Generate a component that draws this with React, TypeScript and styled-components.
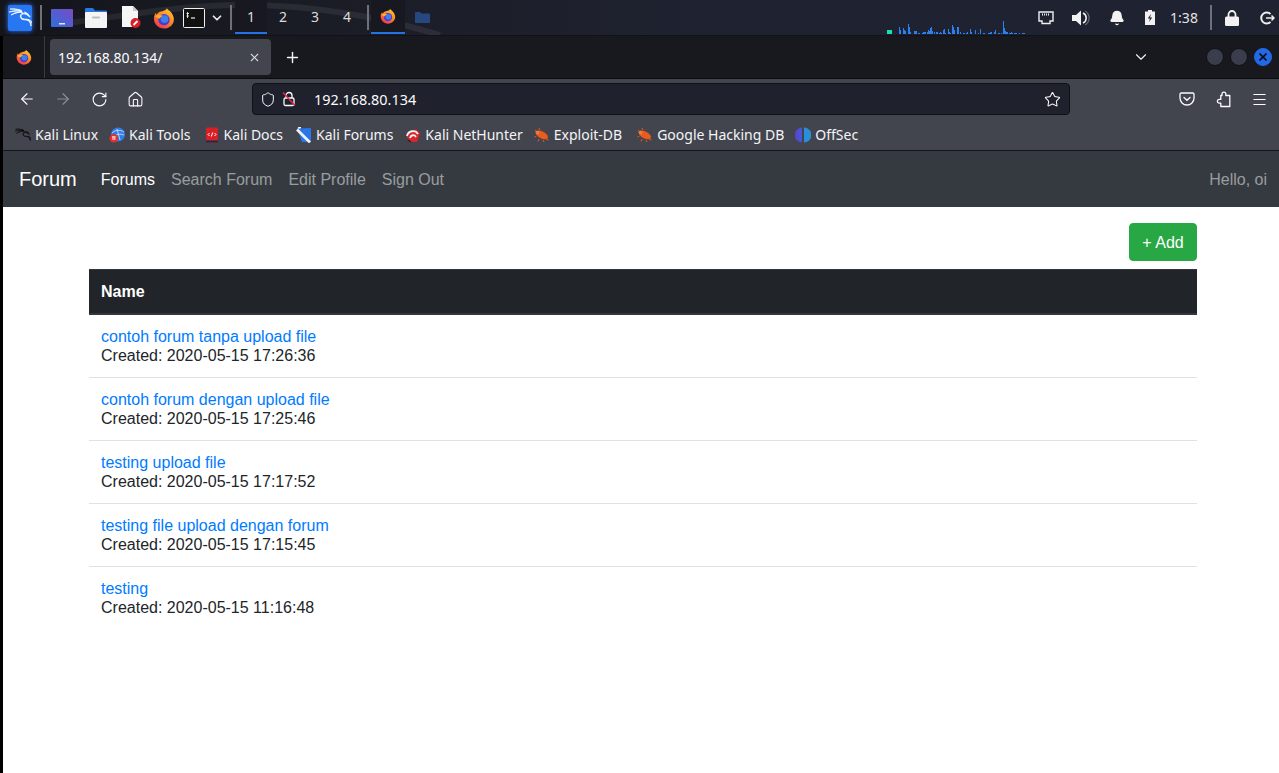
import React from "react";
import styled, { createGlobalStyle } from "styled-components";
import { ArrowLeft, ArrowRight, RotateCw, House, Shield, Star, Plus, X, ChevronDown, Menu, Bell } from "lucide-react";
import { SiKalilinux } from "react-icons/si";

const Global = createGlobalStyle`
  html, body { margin: 0; padding: 0; background: #000; }
  * { box-sizing: border-box; }
`;

const Screen = styled.div`
  width: 1279px;
  height: 773px;
  overflow: hidden;
  display: flex;
  flex-direction: column;
  background: #000;
  font-family: "Noto Sans", sans-serif;
`;

/* ---------- desktop panel ---------- */
const Panel = styled.div`
  position: relative;
  height: 36px;
  flex: none;
  display: flex;
  align-items: stretch;
  padding-left: 4px;
  background: linear-gradient(90deg, #14151b 0, #1a1c25 300px, #1f2230 700px, #1f2230 100%);
  border-bottom: 1px solid #111218;
  overflow: hidden;
  color: #e6e6e6;
`;
const Swoosh = styled.svg`
  position: absolute;
  left: 0;
  top: 0;
  pointer-events: none;
`;
const Slot = styled.div<{ $w: number; $ml?: number }>`
  position: relative;
  width: ${(p) => p.$w}px;
  margin-left: ${(p) => p.$ml ?? 0}px;
  flex: none;
  display: flex;
  align-items: center;
  justify-content: center;
`;
const PanelSep = styled.div<{ $ml: number; $mr: number }>`
  position: relative;
  width: 2px;
  flex: none;
  margin: 5px ${(p) => p.$mr}px 5px ${(p) => p.$ml}px;
  background: #6f7178;
`;
const KaliBadge = styled.div`
  width: 24px;
  height: 26px;
  display: flex;
  align-items: center;
  justify-content: center;
  background: #2777f5;
  border-radius: 2px;
  box-shadow: 0 0 5px #2a78ff;
  color: #fff;
`;
const Workspace = styled.div<{ $active?: boolean; $w?: number }>`
  position: relative;
  width: ${(p) => p.$w ?? 32}px;
  flex: none;
  display: flex;
  align-items: center;
  justify-content: center;
  font-size: 14px;
  color: #dcdcdc;
  background: ${(p) => (p.$active ? "#171820" : "transparent")};
  border-bottom: 2px solid ${(p) => (p.$active ? "#2473e6" : "transparent")};
  margin-bottom: 1px;
`;
const Spacer = styled.div`
  flex: 1;
`;
const Graph = styled.svg`
  position: relative;
  flex: none;
  align-self: flex-end;
  margin-right: 4px;
  margin-bottom: 1px;
`;
const Clock = styled.div`
  position: relative;
  width: 38px;
  flex: none;
  display: flex;
  align-items: center;
  justify-content: center;
  font-size: 14px;
  color: #e4e4e4;
`;

/* ---------- browser ---------- */
const Browser = styled.div`
  flex: 1;
  min-height: 0;
  margin-left: 3px;
  display: flex;
  flex-direction: column;
`;
const TabBar = styled.div`
  position: relative;
  height: 43px;
  flex: none;
  display: flex;
  align-items: center;
  background: #18191f;
  color: #f4f4f5;
  border-bottom: 1px solid #0c0c0f;
`;
const TabLogo = styled.div`
  width: 42px;
  align-self: stretch;
  flex: none;
  display: flex;
  align-items: center;
  justify-content: center;
  border-right: 1px solid #3a3b42;
  margin-right: 5px;
`;
const Tab = styled.div`
  width: 221px;
  height: 36px;
  flex: none;
  display: flex;
  align-items: center;
  justify-content: space-between;
  padding: 0 10px 0 8px;
  background: #42454e;
  border-radius: 4px;
  font-size: 14px;
  color: #fbfbfe;
`;
const NewTab = styled.div`
  width: 42px;
  flex: none;
  display: flex;
  justify-content: center;
`;
const WinButtons = styled.div`
  display: flex;
  align-items: center;
  gap: 6px;
  margin: 0 7px 0 56px;
`;
const WinButton = styled.div<{ $close?: boolean }>`
  width: 18px;
  height: 18px;
  border-radius: 50%;
  display: flex;
  align-items: center;
  justify-content: center;
  color: #0a0a10;
  background: ${(p) => (p.$close ? "#2369e6" : "#3a3e4c")};
  border: 1px solid ${(p) => (p.$close ? "#2369e6" : "#101116")};
`;
const Toolbar = styled.div`
  height: 41px;
  flex: none;
  display: flex;
  align-items: center;
  padding: 0 0 1px 6px;
  background: #42454e;
  color: #fbfbfe;
`;
const ToolButton = styled.div<{ $dim?: boolean }>`
  width: 36px;
  flex: none;
  display: flex;
  justify-content: center;
  opacity: ${(p) => (p.$dim ? 0.4 : 1)};
`;
const UrlBar = styled.div`
  width: 818px;
  height: 32px;
  flex: none;
  margin: 0 99px 0 99px;
  display: flex;
  align-items: center;
  padding: 0 8px 0 7px;
  background: #1f212c;
  border: 1px solid #101116;
  border-radius: 4px;
  font-size: 14.4px;
`;
const UrlText = styled.span`
  flex: 1;
  margin-left: 17px;
`;
const UrlIcon = styled.div<{ $ml?: number }>`
  width: 16px;
  margin-left: ${(p) => p.$ml ?? 0}px;
  display: flex;
  justify-content: center;
`;
const Bookmarks = styled.div`
  height: 31px;
  flex: none;
  display: flex;
  align-items: center;
  gap: 12px;
  padding: 0 0 1px 12px;
  background: #42454e;
  border-bottom: 1px solid #14151a;
  font-size: 14px;
  color: #f4f4f6;
`;
const Bookmark = styled.div<{ $nudge: number }>`
  display: flex;
  align-items: center;
  gap: 4px;
  white-space: nowrap;
  margin-right: ${(p) => p.$nudge}px;
`;

/* ---------- page ---------- */
const Page = styled.div`
  flex: 1;
  min-height: 0;
  background: #fff;
  font-family: "Liberation Sans", Arial, sans-serif;
  font-size: 16px;
  color: #212529;
`;
const NavBar = styled.nav`
  height: 56px;
  display: flex;
  align-items: center;
  padding: 0 12px 0 16px;
  background: #343a40;
`;
const Brand = styled.a`
  font-size: 20px;
  color: #fff;
  margin-right: 16px;
`;
const NavLink = styled.a<{ $active?: boolean }>`
  padding: 2px 8px 0;
  color: ${(p) => (p.$active ? "#fff" : "rgba(255,255,255,.5)")};
`;
const Hello = styled.span`
  margin-left: auto;
  padding-top: 2px;
  color: rgba(255, 255, 255, 0.5);
`;
const Content = styled.main`
  padding: 16px 82px 0 86px;
  line-height: 19px;
`;
const Actions = styled.div`
  display: flex;
  justify-content: flex-end;
  margin-bottom: 8px;
`;
const AddButton = styled.button`
  width: 68px;
  height: 38px;
  padding: 0;
  border: 1px solid #28a745;
  border-radius: 4px;
  background: #28a745;
  color: #fff;
  font: inherit;
`;
const TableHead = styled.div`
  height: 46px;
  padding: 12px;
  background: #212529;
  border-top: 1px solid #32383e;
  border-bottom: 2px solid #32383e;
  color: #fff;
  font-weight: 700;
`;
const Row = styled.div`
  padding: 12px;
  border-bottom: 1px solid #dee2e6;
  &:last-child {
    border-bottom: 0;
  }
`;
const RowLink = styled.a`
  display: block;
  color: #007bff;
`;

/* ---------- drawings ---------- */
const Firefox = ({ s = 20 }: { s?: number }) => (
  <svg width={s} height={s} viewBox="0 0 24 24">
    <defs>
      <linearGradient id="ffo" x1="0.8" y1="0" x2="0.2" y2="1">
        <stop offset="0" stopColor="#ffcb2e" />
        <stop offset="0.45" stopColor="#ff8a24" />
        <stop offset="1" stopColor="#f0304f" />
      </linearGradient>
    </defs>
    <path d="M15 1c1 2.500 5 3 6.800 8.200C23 12 23 14 22.300 16.500 20.800 20.500 17 23.500 12 23.500 5.500 23.500 1 18.500 1 12.500 1 10 1.800 8 3 6.500l1 2C5 6.500 7 5 9 4.800 12 3.800 15 3.500 15 1z" fill="url(#ffo)" />
    <circle cx="12" cy="13.800" r="6.200" fill="#4a3bd0" />
    <circle cx="12.600" cy="13.200" r="4.200" fill="#3f7fe8" />
    <path d="M2.500 10c2.500-1.500 5-2 8.500-.5 -1.500.8-3 1.500-3.500 3 -2-.2-3.800-1-5-2.500z" fill="#ffb02e" />
  </svg>
);
const Bug = () => (
  <svg width="16" height="16" viewBox="0 0 16 16">
    <g stroke="#e8551c" strokeWidth="1" fill="none">
      <path d="M3 5 1 3M6 3.500 5 1M2.500 9 0.500 10M5 12 4 14.500M9 13l1 2M12 12l2.500 1" />
    </g>
    <ellipse cx="8" cy="8" rx="6.500" ry="3.500" transform="rotate(28 8 8)" fill="#ec5a1e" />
    <circle cx="3.500" cy="5.500" r="2" fill="#f27a35" />
  </svg>
);
const Icons = {
  kaliTools: (
    <svg width="16" height="16" viewBox="0 0 16 16">
      <circle cx="9" cy="7.500" r="7" fill="#2f7de8" />
      <path d="M3 6c3-3 8-3.500 12-1M6 9c2-2 5-2.500 9-1M8 2l3 11" stroke="#d5e6fb" strokeWidth=".8" fill="none" />
      <circle cx="4.800" cy="11.200" r="4.300" fill="#e2302e" />
      <path d="M3 9.800h3.600M4 10v3M5.800 10v3" stroke="#fff" strokeWidth=".9" />
    </svg>
  ),
  kaliDocs: (
    <svg width="16" height="16" viewBox="0 0 16 16">
      <rect x="2" y="0.500" width="12" height="15" rx="1" fill="#d81f26" />
      <rect x="2" y="13.500" width="12" height="2" fill="#1c2a4a" />
      <path d="M5.500 6 4 7.500 5.500 9M10.500 6 12 7.500 10.500 9M8.700 5.500 7.300 9.500" stroke="#fff" strokeWidth="1" fill="none" />
    </svg>
  ),
  kaliForums: (
    <svg width="16" height="16" viewBox="0 0 16 16">
      <path d="M1 1.500 15 1v14H6z" fill="#2877e6" />
      <path d="M1 2.500 11 12.500l3 3" stroke="#f2f2f2" strokeWidth="2.600" fill="none" />
      <path d="M2 1 5 0.500" stroke="#fff" strokeWidth="1.500" />
    </svg>
  ),
  netHunter: (
    <svg width="16" height="16" viewBox="0 0 16 16">
      <path d="M1 8 11 2l4 4-3 9H5z" fill="#d9262e" />
      <path d="M2 9c1-5 8-7 11-2M5 11c1-3 4-4 6-1" stroke="#f3f3f3" strokeWidth="1.800" fill="none" />
      <path d="M3 13l3 2" stroke="#222" strokeWidth="1.500" />
    </svg>
  ),
  offSec: (
    <svg width="16" height="16" viewBox="0 0 16 16">
      <path d="M7 .500A7.500 7.500 0 0 0 7 15.500z" fill="#5a45c9" />
      <path d="M9 .500A7.500 7.500 0 0 1 9 15.500z" fill="#2a8fd8" />
      <path d="M7 .500A7.500 7.500 0 0 0 3 4v8l4 3.500z" fill="#3f5fd8" opacity=".7" />
    </svg>
  ),
  insecure: (
    <svg width="16" height="16" viewBox="0 0 16 16" fill="none">
      <rect x="3" y="7" width="10" height="7.500" rx="1.500" stroke="#fbfbfe" strokeWidth="1.300" />
      <path d="M5 7V4.500a3 3 0 0 1 6 0V7" stroke="#fbfbfe" strokeWidth="1.300" />
      <path d="M2 1.500 14 14.500" stroke="#e22850" strokeWidth="1.500" />
    </svg>
  ),
  pocket: (
    <svg width="16" height="16" viewBox="0 0 16 16" fill="none" stroke="#fbfbfe" strokeWidth="1.300">
      <path d="M2.200 2h11.600c.7 0 1.200.5 1.200 1.200V7c0 3.900-3.100 7-7 7s-7-3.100-7-7V3.200C1 2.500 1.500 2 2.200 2z" />
      <path d="M5 6.500 8 9.300l3-2.800" strokeLinecap="round" />
    </svg>
  ),
  extension: (
    <svg width="17" height="17" viewBox="0 0 17 17" fill="none" stroke="#fbfbfe" strokeWidth="1.300">
      <path d="M7 4.500V3a1.900 1.900 0 0 1 3.800 0v1.500h4v11h-9v-3.300H4.300a1.900 1.900 0 0 1 0-3.800H5.800v-3.900z" strokeLinejoin="round" />
    </svg>
  ),
  windowDesk: (
    <svg width="22" height="18" viewBox="0 0 22 18">
      <defs>
        <linearGradient id="dsk" x1="0" y1="1" x2="1" y2="0">
          <stop offset="0" stopColor="#2f6fdc" />
          <stop offset="1" stopColor="#7a4ac4" />
        </linearGradient>
      </defs>
      <rect width="22" height="18" rx="1" fill="url(#dsk)" />
      <rect x="8" y="14" width="6" height="1.500" fill="#dfe6f5" />
    </svg>
  ),
  files: (
    <svg width="22" height="20" viewBox="0 0 22 20">
      <path d="M1 0h7l2 2.500h11a1 1 0 0 1 1 1V8H0V1a1 1 0 0 1 1-1z" fill="#2a76e0" />
      <rect y="4" width="22" height="16" rx="1" fill="#f5f5f5" />
      <rect x="7" y="8.500" width="8" height="2" rx="1" fill="#bdbdbd" />
    </svg>
  ),
  editor: (
    <svg width="21" height="23" viewBox="0 0 21 23">
      <path d="M1 0h11l5 5v16H1z" fill="#f6f6f6" />
      <path d="M12 0l5 5h-5z" fill="#c8c8c8" />
      <circle cx="14.500" cy="17" r="5" fill="#d81f26" />
      <path d="M12.500 19l4-4" stroke="#fff" strokeWidth="1.800" />
    </svg>
  ),
  terminal: (
    <svg width="22" height="20" viewBox="0 0 22 20">
      <rect x=".5" y=".5" width="21" height="19" rx="1" fill="#111" stroke="#f2f2f2" />
      <path d="M4.500 4v6M3.500 5.500h2.500M3.500 8h2.500" stroke="#eee" strokeWidth=".9" />
      <path d="M8 10h4" stroke="#eee" strokeWidth="1.200" />
    </svg>
  ),
  dimFolder: (
    <svg width="15" height="11" viewBox="0 0 15 11">
      <path d="M0 1a1 1 0 0 1 1-1h4l1.500 1.500H14a1 1 0 0 1 1 1V10a1 1 0 0 1-1 1H1a1 1 0 0 1-1-1z" fill="#27477f" />
    </svg>
  ),
  net: (
    <svg width="16" height="14" viewBox="0 0 16 14" fill="none" stroke="#efefef" strokeWidth="1.400">
      <path d="M1 1h14v9h-3v2.500H4V10H1z" />
      <path d="M4 3.500h8" strokeDasharray="1 1" strokeWidth="2" />
    </svg>
  ),
  volume: (
    <svg width="18" height="16" viewBox="0 0 18 16">
      <path d="M0 5h4l5-4.500v15L4 11H0z" fill="#f2f2f2" />
      <path d="M11 3a5.500 5.500 0 0 1 0 10" stroke="#f2f2f2" strokeWidth="1.500" fill="none" />
      <path d="M13 1a8 8 0 0 1 0 14" stroke="#666" strokeWidth="1.300" fill="none" />
    </svg>
  ),
  battery: (
    <svg width="10" height="15" viewBox="0 0 10 15">
      <path d="M3 0h4v1.500h3V15H0V1.500h3z" fill="#f2f2f2" />
      <path d="M6 4 2.800 8.500H5L4 12l3.200-4.500H5z" fill="#1f2230" />
    </svg>
  ),
  lock: (
    <svg width="14" height="16" viewBox="0 0 14 16">
      <path d="M3.500 7V4.500a3.500 3.500 0 0 1 7 0V7" stroke="#f2f2f2" strokeWidth="1.800" fill="none" />
      <rect y="6.500" width="14" height="9.500" rx="1.500" fill="#f2f2f2" />
    </svg>
  ),
  logout: (
    <svg width="15" height="14" viewBox="0 0 15 14" fill="none" stroke="#efefef" strokeWidth="2">
      <path d="M10.500 3A5.500 5.500 0 1 0 10.500 11" />
      <path d="M6 7h8.500M11.500 4.500 14 7l-2.500 2.500" strokeWidth="1.500" />
    </svg>
  ),
};

const bars: [number, number][] = [
  [14, 7], [15, 4], [18, 6], [19, 4], [20, 3], [23, 10], [24, 7], [25, 2], [29, 3], [30, 3], [31, 3], [33, 1], [34, 1],
  [37, 1], [38, 2], [39, 2], [40, 2], [42, 2], [43, 4], [44, 3], [45, 6], [46, 7], [47, 3], [49, 2], [51, 2], [52, 2],
  [54, 1], [55, 2], [56, 1], [58, 4], [59, 5], [60, 1], [63, 5], [64, 2], [65, 1], [67, 9], [68, 7], [69, 4], [72, 7], [73, 7],
  [75, 2], [78, 1], [79, 1], [81, 1], [82, 2], [85, 5], [86, 2], [90, 4], [93, 1], [95, 5], [98, 1], [99, 1],
  [103, 1], [104, 1], [105, 2], [106, 2], [109, 2], [110, 4], [113, 1], [114, 1], [116, 1], [118, 13], [119, 6], [120, 3], [121, 2], [122, 2],
  [124, 1], [125, 1], [126, 2], [127, 1], [129, 1], [130, 1], [131, 1], [134, 1], [137, 1], [138, 1], [139, 1],
];

const forums = [
  ["contoh forum tanpa upload file", "2020-05-15 17:26:36"],
  ["contoh forum dengan upload file", "2020-05-15 17:25:46"],
  ["testing upload file", "2020-05-15 17:17:52"],
  ["testing file upload dengan forum", "2020-05-15 17:15:45"],
  ["testing", "2020-05-15 11:16:48"],
];

const marks: [React.ReactNode, string, number][] = [
  [<SiKalilinux key="k" size={16} color="#0c0c0c" stroke="#0c0c0c" strokeWidth={0.7} />, "Kali Linux", -1],
  [Icons.kaliTools, "Kali Tools", 1],
  [Icons.kaliDocs, "Kali Docs", 1],
  [Icons.kaliForums, "Kali Forums", 0],
  [Icons.netHunter, "Kali NetHunter", -1],
  [<Bug key="b1" />, "Exploit-DB", 3],
  [<Bug key="b2" />, "Google Hacking DB", -1],
  [Icons.offSec, "OffSec", 0],
];

export default function App() {
  return (
    <Screen>
      <Global />
      <Panel>
        <Swoosh width="1279" height="36" viewBox="0 0 1279 36">
          <path d="M60 24C120 17 180 4 250 5c70 1 130 12 190 30" stroke="#fff" strokeOpacity=".07" strokeWidth="6" fill="none" />
        </Swoosh>
        <Slot $w={32}>
          <KaliBadge>
            <SiKalilinux size={23} stroke="#fff" strokeWidth={0.8} />
          </KaliBadge>
        </Slot>
        <PanelSep $ml={4} $mr={5} />
        <Slot $w={30}>{Icons.windowDesk}</Slot>
        <Slot $w={38}>{Icons.files}</Slot>
        <Slot $w={32}>{Icons.editor}</Slot>
        <Slot $w={34}>
          <Firefox s={22} />
        </Slot>
        <Slot $w={26}>{Icons.terminal}</Slot>
        <Slot $w={20}>
          <ChevronDown size={14} strokeWidth={3} color="#eee" />
        </Slot>
        <PanelSep $ml={3} $mr={3} />
        <Workspace $active>1</Workspace>
        <Workspace>2</Workspace>
        <Workspace>3</Workspace>
        <Workspace>4</Workspace>
        <PanelSep $ml={4} $mr={2} />
        <Workspace $active $w={34}>
          <Firefox s={16} />
        </Workspace>
        <Slot $w={34}>{Icons.dimFolder}</Slot>
        <Spacer />
        <Graph width="140" height="16" viewBox="0 0 140 16">
          <rect x="2" y="12" width="5" height="4" fill="#14e0b0" />
          {bars.map(([x, h]) => (
            <rect key={x} x={x} y={16 - h} width="1" height={h} fill="#2a80f0" />
          ))}
        </Graph>
        <Slot $w={34}>{Icons.net}</Slot>
        <Slot $w={36}>{Icons.volume}</Slot>
        <Slot $w={36}>
          <Bell size={16} fill="#f2f2f2" color="#f2f2f2" />
        </Slot>
        <Slot $w={30}>{Icons.battery}</Slot>
        <Clock>1:38</Clock>
        <PanelSep $ml={7} $mr={3} />
        <Slot $w={34}>{Icons.lock}</Slot>
        <Slot $w={24} $ml={6}>
          {Icons.logout}
        </Slot>
      </Panel>

      <Browser>
        <TabBar>
          <TabLogo>
            <Firefox s={16} />
          </TabLogo>
          <Tab>
            192.168.80.134/
            <X size={13} color="#d8d8d8" />
          </Tab>
          <NewTab>
            <Plus size={17} />
          </NewTab>
          <Spacer />
          <ChevronDown size={18} strokeWidth={1.500} />
          <WinButtons>
            <WinButton />
            <WinButton />
            <WinButton $close>
              <X size={12} strokeWidth={3.500} />
            </WinButton>
          </WinButtons>
        </TabBar>

        <Toolbar>
          <ToolButton>
            <ArrowLeft size={18} strokeWidth={1.500} />
          </ToolButton>
          <ToolButton $dim>
            <ArrowRight size={18} strokeWidth={1.500} />
          </ToolButton>
          <ToolButton>
            <RotateCw size={17} strokeWidth={1.600} />
          </ToolButton>
          <ToolButton>
            <House size={17} strokeWidth={1.500} />
          </ToolButton>
          <UrlBar>
            <UrlIcon>
              <Shield size={17} strokeWidth={1.500} />
            </UrlIcon>
            <UrlIcon $ml={5}>{Icons.insecure}</UrlIcon>
            <UrlText>192.168.80.134</UrlText>
            <Star size={17} strokeWidth={1.500} />
          </UrlBar>
          <ToolButton>{Icons.pocket}</ToolButton>
          <ToolButton>{Icons.extension}</ToolButton>
          <ToolButton>
            <Menu size={17} strokeWidth={1.500} />
          </ToolButton>
        </Toolbar>

        <Bookmarks>
          {marks.map(([icon, label, nudge]) => (
            <Bookmark key={label} $nudge={nudge}>
              {icon}
              {label}
            </Bookmark>
          ))}
        </Bookmarks>

        <Page>
          <NavBar>
            <Brand>Forum</Brand>
            <NavLink $active>Forums</NavLink>
            <NavLink>Search Forum</NavLink>
            <NavLink>Edit Profile</NavLink>
            <NavLink>Sign Out</NavLink>
            <Hello>Hello, oi</Hello>
          </NavBar>
          <Content>
            <Actions>
              <AddButton>+ Add</AddButton>
            </Actions>
            <TableHead>Name</TableHead>
            {forums.map(([name, created]) => (
              <Row key={created}>
                <RowLink>{name}</RowLink>
                Created: {created}
              </Row>
            ))}
          </Content>
        </Page>
      </Browser>
    </Screen>
  );
}
